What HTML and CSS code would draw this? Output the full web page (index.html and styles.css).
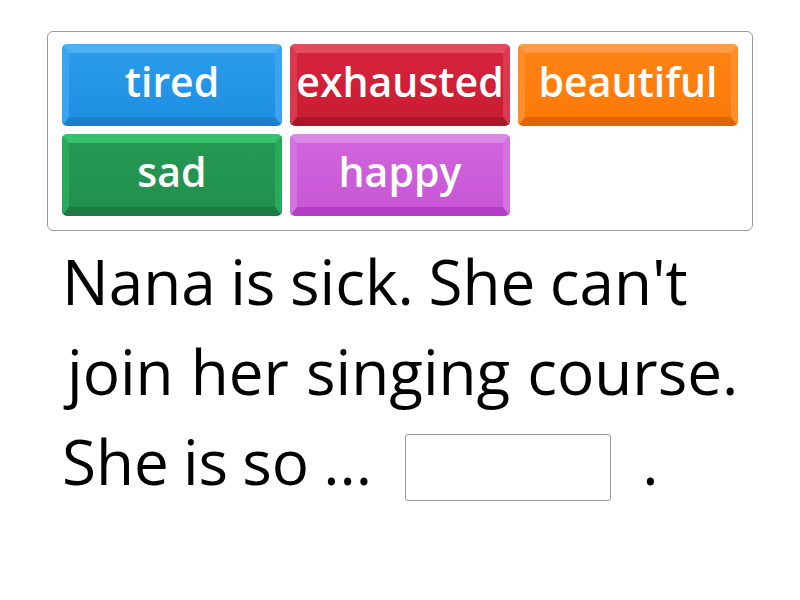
FILE: index.html
```html
<!DOCTYPE html>
<html>
<head>
<meta charset="utf-8">
<link rel="stylesheet" href="styles.css">
</head>
<body>
<div class="page">
  <div class="bank">
    <div class="tile blue">tired</div>
    <div class="tile red">exhausted</div>
    <div class="tile orange">beautiful</div>
    <div class="tile green">sad</div>
    <div class="tile purple">happy</div>
  </div>
  <div class="sentence">
    <div class="line l1">Nana is sick. She can't</div>
    <div class="line l2">join her singing course.</div>
    <div class="line l3">She is so ... <span class="blank"></span> <span class="dot">.</span></div>
  </div>
</div>
</body>
</html>
```
FILE: styles.css
```css
html, body {
  margin: 0;
  padding: 0;
  background: #fff;
}
.page {
  width: 800px;
  height: 600px;
  padding: 31px 0 0 47px;
  box-sizing: border-box;
  font-family: "Open Sans", "Liberation Sans", sans-serif;
}
.bank {
  width: 706px;
  height: 200px;
  box-sizing: border-box;
  border: 1px solid #9a9a9a;
  border-radius: 6px;
  padding: 12px 14px 13px 14px;
  display: grid;
  grid-template-columns: repeat(3, 220px);
  grid-auto-rows: 82px;
  column-gap: 8px;
  row-gap: 8px;
}
.tile {
  box-sizing: border-box;
  border-radius: 5px;
  border-style: solid;
  border-width: 9px 7px 9px 7px;
  color: #fff;
  font-size: 41px;
  font-weight: 600;
  display: flex;
  align-items: center;
  justify-content: center;
  line-height: 1;
  padding-bottom: 7px;
}
.blue {
  background: linear-gradient(#2a9bea, #1f90e2);
  border-color: #4db0f2 #3aa5ee #1b7fcc #3aa5ee;
}
.red {
  background: linear-gradient(#d6223c, #c91d33);
  border-color: #e14c5e #da3a4e #ab1728 #da3a4e;
}
.orange {
  background: linear-gradient(#ff8212, #fb7a0a);
  border-color: #ff9b45 #ff8d2a #df6504 #ff8d2a;
}
.green {
  background: linear-gradient(#249853, #22904e);
  border-color: #35c26b #2aa85c #1b7b41 #2aa85c;
}
.purple {
  background: linear-gradient(#cf64db, #c957d7);
  border-color: #da8ae4 #d273de #b53dc6 #d273de;
}
.sentence {
  margin-top: 5px;
  margin-left: 15px;
  font-size: 62px;
  line-height: 90px;
  color: #000;
}
.line {
  white-space: nowrap;
}
.l1 {
  word-spacing: -1.5px;
}
.l2 {
  padding-left: 5px;
  word-spacing: 1px;
}
.l3 {
  word-spacing: -2px;
}
.blank {
  display: inline-block;
  width: 206px;
  height: 67px;
  box-sizing: border-box;
  border: 1px solid #999;
  border-radius: 3px;
  vertical-align: -16px;
  margin-left: 19px;
}
.dot {
  margin-left: 17px;
}
```
